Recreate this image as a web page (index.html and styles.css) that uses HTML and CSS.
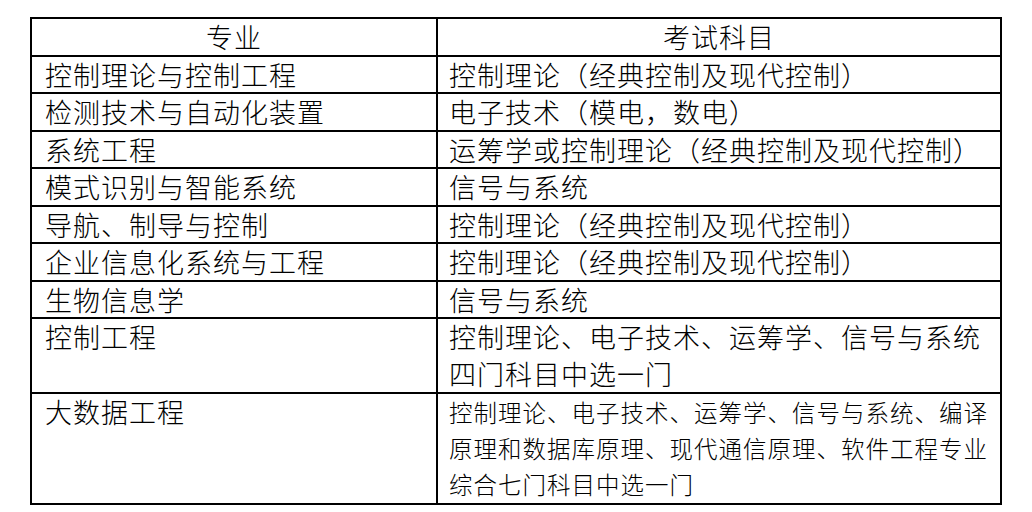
FILE: index.html
```html
<!DOCTYPE html>
<html lang="zh-CN">
<head>
<meta charset="utf-8">
<title>专业与考试科目</title>
<link rel="stylesheet" href="styles.css">
</head>
<body>
<table class="subjects">
  <colgroup>
    <col class="col-major">
    <col class="col-exam">
  </colgroup>
  <thead>
    <tr><th>专业</th><th>考试科目</th></tr>
  </thead>
  <tbody>
    <tr><td>控制理论与控制工程</td><td>控制理论（经典控制及现代控制）</td></tr>
    <tr><td>检测技术与自动化装置</td><td>电子技术（模电，数电）</td></tr>
    <tr><td>系统工程</td><td>运筹学或控制理论（经典控制及现代控制）</td></tr>
    <tr><td>模式识别与智能系统</td><td>信号与系统</td></tr>
    <tr><td>导航、制导与控制</td><td>控制理论（经典控制及现代控制）</td></tr>
    <tr><td>企业信息化系统与工程</td><td>控制理论（经典控制及现代控制）</td></tr>
    <tr><td>生物信息学</td><td>信号与系统</td></tr>
    <tr class="multi"><td>控制工程</td><td>控制理论、电子技术、运筹学、信号与系统<br>四门科目中选一门</td></tr>
    <tr class="multi"><td>大数据工程</td><td class="small">控制理论、电子技术、运筹学、信号与系统、编译<br>原理和数据库原理、现代通信原理、软件工程专业<br>综合七门科目中选一门</td></tr>
  </tbody>
</table>
</body>
</html>
```

FILE: styles.css
```css
html, body {
  margin: 0;
  background: #fff;
}
body {
  padding: 17px 0 0 30px;
  font-family: "Noto Sans CJK SC", "Noto Sans", sans-serif;
  color: #000;
}
.subjects {
  border-collapse: collapse;
  width: 970px;
  table-layout: fixed;
}
.col-major { width: 406px; }
.col-exam { width: 564px; }
.subjects th,
.subjects td {
  border: 2px solid #000;
  font-size: 27px;
  font-weight: 300;
  line-height: 35.5px;
  padding: 0 0 0 13px;
  text-align: left;
  vertical-align: middle;
  white-space: nowrap;
  letter-spacing: 1px;
}
.subjects th {
  text-align: center;
  padding: 0;
  font-weight: 300;
}
.subjects td + td { padding-left: 11px; }
.multi td {
  vertical-align: top;
  line-height: 36.5px;
}
.multi td.small {
  font-size: 23.5px;
  letter-spacing: 1px;
  line-height: 36.2px;
}
```
